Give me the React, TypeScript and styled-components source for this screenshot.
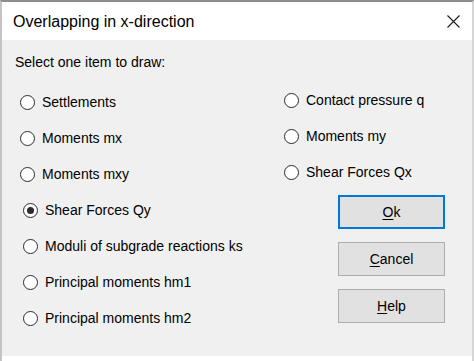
import React, { useState } from 'react';
import styled, { createGlobalStyle } from 'styled-components';

const GlobalStyle = createGlobalStyle`
  html, body {
    margin: 0;
    padding: 0;
    background: #ffffff;
  }
  body {
    font-family: "Liberation Sans", Arial, sans-serif;
    color: #000;
  }
`;

const leftItems = [
  'Settlements',
  'Moments mx',
  'Moments mxy',
  'Shear Forces Qy',
  'Moduli of subgrade reactions ks',
  'Principal moments hm1',
  'Principal moments hm2',
];

const rightItems = ['Contact pressure q', 'Moments my', 'Shear Forces Qx'];

const App: React.FC = () => {
  const [selected, setSelected] = useState('Shear Forces Qy');

  return (
    <>
      <GlobalStyle />
      <Window>
        <TitleBar>
          <Title>Overlapping in x-direction</Title>
          <CloseButton aria-label="Close">
            <svg width="13" height="13" viewBox="0 0 13 13">
              <path d="M0.5 0.5 L12.5 12.5 M12.5 0.5 L0.5 12.5" stroke="#1a1a1a" strokeWidth="1.1" fill="none" />
            </svg>
          </CloseButton>
        </TitleBar>
        <Body>
          <Prompt>Select one item to draw:</Prompt>
          <Columns>
            <LeftColumn>
              {leftItems.map((item, i) => (
                <RadioRow key={item} indent={i >= 3} onClick={() => setSelected(item)}>
                  <RadioCircle checked={selected === item} />
                  <RadioLabel>{item}</RadioLabel>
                </RadioRow>
              ))}
            </LeftColumn>
            <RightColumn>
              {rightItems.map((item) => (
                <RadioRow key={item} indent={false} onClick={() => setSelected(item)}>
                  <RadioCircle checked={selected === item} />
                  <RadioLabel>{item}</RadioLabel>
                </RadioRow>
              ))}
              <Buttons>
                <Button primary>
                  <u>O</u>k
                </Button>
                <Button>
                  <u>C</u>ancel
                </Button>
                <Button>
                  <u>H</u>elp
                </Button>
              </Buttons>
            </RightColumn>
          </Columns>
        </Body>
      </Window>
    </>
  );
};

export default App;

const Window = styled.div`
  width: 474px;
  height: 361px;
  box-sizing: border-box;
  border-top: 2px solid #8c8c8c;
  border-left: 2px solid #c4c4c4;
  border-right: 2px solid #d6d6d6;
  padding-bottom: 5px;
  background: #ffffff;
  display: flex;
  flex-direction: column;
  overflow: hidden;
`;

const TitleBar = styled.div`
  height: 38px;
  flex: none;
  display: flex;
  align-items: center;
  justify-content: space-between;
  padding-left: 11px;
  background: #ffffff;
`;

const Title = styled.div`
  font-size: 16px;
  color: #000;
  margin-top: 1px;
`;

const CloseButton = styled.div`
  width: 46px;
  height: 38px;
  display: flex;
  align-items: center;
  justify-content: center;
  margin-right: -4px;
`;

const Body = styled.div`
  flex: 1;
  background: #f0f0f0;
  padding: 14px 0 0 13px;
`;

const Prompt = styled.div`
  font-size: 14px;
  line-height: 16px;
`;

const Columns = styled.div`
  display: flex;
  margin-top: 14px;
`;

const LeftColumn = styled.div`
  width: 264px;
  padding-left: 5px;
  display: flex;
  flex-direction: column;
`;

const RightColumn = styled.div`
  display: flex;
  flex-direction: column;
  margin-top: -2px;
`;

const RadioRow = styled.div<{ indent: boolean }>`
  height: 36px;
  display: flex;
  align-items: center;
  gap: 7px;
  padding-left: ${({ indent }) => (indent ? '3px' : '0')};
  cursor: default;
`;

const RadioCircle = styled.span<{ checked: boolean }>`
  width: 13px;
  height: 13px;
  border: 1.3px solid #2b2b2b;
  border-radius: 50%;
  background: #ffffff;
  flex: none;
  display: flex;
  align-items: center;
  justify-content: center;

  &::after {
    content: '';
    width: 7px;
    height: 7px;
    border-radius: 50%;
    background: #2b2b2b;
    display: ${({ checked }) => (checked ? 'block' : 'none')};
  }
`;

const RadioLabel = styled.span`
  font-size: 14px;
  white-space: nowrap;
`;

const Buttons = styled.div`
  display: flex;
  flex-direction: column;
  gap: 13px;
  margin: 5px 0 0 54px;
`;

const Button = styled.button<{ primary?: boolean }>`
  width: 107px;
  height: 34px;
  box-sizing: border-box;
  background: #e1e1e1;
  border: ${({ primary }) => (primary ? '2px solid #0078d7' : '1px solid #adadad')};
  font-family: "Liberation Sans", Arial, sans-serif;
  font-size: 14px;
  color: #000;
  padding: 0;
  cursor: pointer;

  u {
    text-underline-offset: 2px;
  }
`;
